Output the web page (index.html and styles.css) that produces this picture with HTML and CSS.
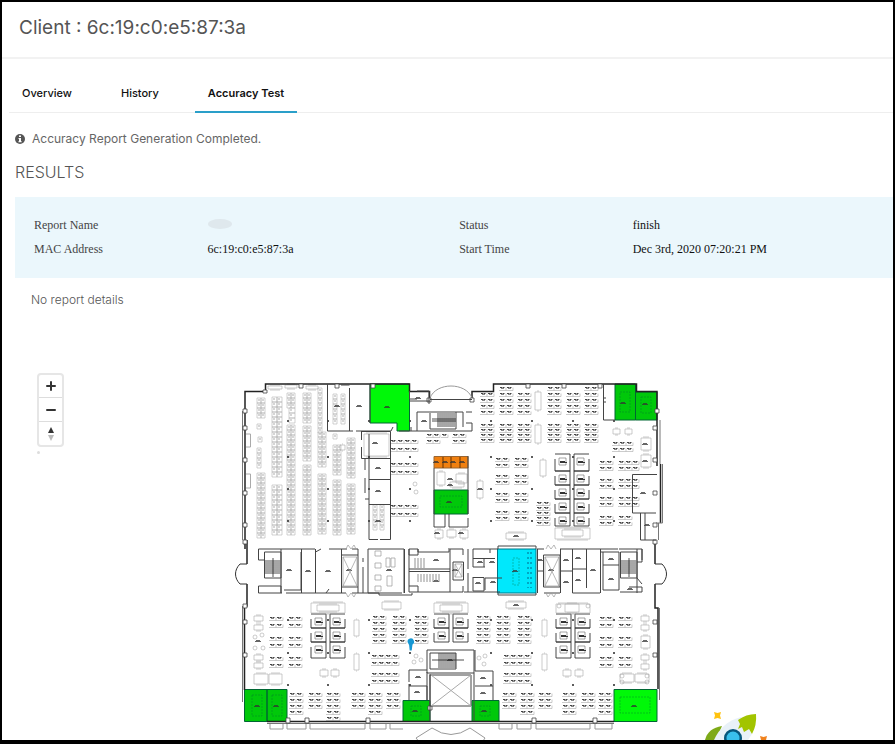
FILE: index.html
```html
<!DOCTYPE html>
<html lang="en">
<head>
  <meta charset="UTF-8" />
  <meta name="viewport" content="width=device-width, initial-scale=1.0"/>
  <title>Client : 6c:19:c0:e5:87:3a</title>
  <link rel="stylesheet" href="styles.css">
</head>
<body>
  <header class="header">
    <h1>Client : 6c:19:c0:e5:87:3a</h1>
  </header>

  <nav class="tabs">
    <a class="tab" href="#overview">Overview</a>
    <a class="tab" href="#history">History</a>
    <a class="tab active" href="#accuracy" aria-current="page">Accuracy Test</a>
  </nav>

  <main class="content">
    <p class="message">
      <svg class="info" viewBox="0 0 10 10" aria-hidden="true">
        <circle cx="5" cy="5" r="5" fill="#555"/>
        <path d="M4 1.5h2v1.5H4zM3.500 4H6v3.300h.7v1H3.400v-1H4V5h-.5z" fill="#fff"/>
      </svg>
      Accuracy Report Generation Completed.
    </p>
    <h2>RESULTS</h2>

    <!-- report summary -->
    <dl class="summary">
      <dt>Report Name</dt>
      <dd><span class="masked"></span></dd>
      <dt>Status</dt>
      <dd>finish</dd>
      <dt>MAC Address</dt>
      <dd>6c:19:c0:e5:87:3a</dd>
      <dt>Start Time</dt>
      <dd>Dec 3rd, 2020 07:20:21 PM</dd>
    </dl>
    <p class="empty">No report details</p>
  </main>

  <!-- floor map -->
  <section class="map">
    <svg class="plan" viewBox="2 320 891 420" role="img" aria-label="Floor plan">
      <!-- coloured rooms -->
      <g stroke="#063" stroke-width="1">
        <path d="M370 384H409.500V431H397V423H370z" fill="#00f808"/>
        <path d="M615 384H635.500V420H615zM635.500 392H657V420H635.500z" fill="#00c80a"/>
        <path d="M434 490H468V514H434z" fill="#00c80a"/>
        <path d="M244.500 689.500H267V721.500H244.500zM267 689.500H287V721.500H267z" fill="#00c80a"/>
        <path d="M403 700.500H430V721.500H403zM472 700.500H499V721.500H472z" fill="#00c80a"/>
        <path d="M614 689.500H657V721.500H614z" fill="#00f808"/>
        <path d="M434 456.500H468V468H434z" fill="#f08010" stroke="#963"/>
        <path d="M497.500 549H536V593H497.500z" fill="#00e8fc" stroke="#078"/>
      </g>

      <!-- stalls, tables and desks -->
      <g id="cells" fill="none" stroke="#b4b4b4" stroke-width=".6"></g>
      <g id="desks"></g>
      <g id="offices" fill="none" stroke="#333" stroke-width=".9"></g>
      <g id="tables" fill="none" stroke="#aaa" stroke-width=".6"></g>
      <g id="labels" fill="#333"></g>

      <!-- outer walls -->
      <g class="wall">
        <path d="M245 549V391.500H265.500V384H409.500V391.500H429.500V399"/>
        <path d="M472 399V391.500H493.500V384H636.500V391.500H657V420"/>
        <path d="M247 540V564M247 584V606H243.500M657 420V466M660.500 464V523M655 540V564M655 584V608H658V689"/>
        <path d="M244.500 606V690M267 721.500H614"/>
      </g>
      <g class="line">
        <path d="M242.500 606V702M242.500 411V540M662.500 464V523H656M660 420V464M658.500 523V540M659.500 608V700M267 723.500H614"/>
        <path d="M247 564H240C234 570 234 578 240 584H247M655 564H662C668 570 668 578 662 584H655" stroke="#333"/>
        <path d="M430 398C436 382 466 382 472 398M270 724V729H283V724M287 724V729H306V724M310 724V729H365V724M370 724V729H386V724M390 724V729H403M499 724V729H512V724M517 724V729H531V724M536 724V729H590V724M595 724V729H612V724" stroke="#999"/>
        <path d="M416 738L432 728Q451 741 470 728L485 738M421 744L416 738M481 744L485 738M428 744Q451 749 474 744" stroke="#999"/>
        <path d="M246 434H250.500V447H246M246 474H250.500V488H246" stroke="#aaa"/>
      </g>
      <g fill="#fff" stroke="#444" stroke-width=".8">
        <path d="M243 409h4v4h-4zM243 426h4v4h-4zM243 458h4v4h-4zM243 491h4v4h-4zM243 523h4v4h-4zM243 540h4v4h-4zM243 604h4v4h-4zM243 620h4v4h-4zM243 653h4v4h-4zM263 390h4v3h-4z"/>
        <path d="M299 384h4v4h-4zM335 384h4v4h-4zM371 384h4v4h-4zM526 384h4v4h-4zM562 384h4v4h-4zM598 384h4v4h-4zM427 398h4v4h-4zM470 398h4v4h-4z"/>
        <path d="M655 409h4v4h-4zM653 426h4v4h-4zM653 458h4v4h-4zM653 491h4v4h-4zM653 523h4v4h-4zM653 540h4v4h-4zM653 620h4v4h-4zM653 653h4v4h-4z"/>
        <path d="M286 718h4v5h-4zM305 718h4v5h-4zM366 718h4v5h-4zM532 718h4v5h-4zM593 718h4v5h-4zM428 706h4v4h-4z"/>
      </g>

      <!-- rooms along the top -->
      <g class="room">
        <path d="M327.500 384V431H353M356 431H370M349.500 388V431M349.500 385H341M370 384V423M370 431H391L393 427M399 431H411V427M417 399H409.500V391M417 391H429V404M409.500 401H430M417 431V412H463V427M430 399.500H472M411 431H472V423H466M430 413V429H456V412M466 412H472"/>
        <path d="M361.500 431.500H390.500V539.500H380M378 539.500H369V434M361.500 431V440M361.500 447V458.500H390M365 459V470M365 478V493M365 499H369M369 479.500H390M369 504.500H390"/>
        <path d="M603.500 384V420H615M603.500 402H606M603.500 398H606"/>
        <path d="M657 474.500H632.500V513H656M640.500 513V540H656M645 513V540"/>
        <path d="M434 468V514M468 456V514"/>
      </g>

      <!-- service core -->
      <g class="room">
        <path d="M258.500 549H315M329 549H347M352 549H358V593M258.500 549V560H264M258.500 593V586H281V593M258.500 593H282M286 593H346M352 593H402M264.500 552H281V578H264.500zM281 549V593M301 552V590H284M301.500 549V593M315.500 549V593M341.500 549V593M341.500 555H358M341.500 587H358M315.500 552L321 549M326 593L329 589"/>
        <path d="M368 549H404V593M368 549V593H379V595H412V593M404.500 549V593M409 549H418V555H409zM418 549V552H449V548M409 569H450M409 571.500H450M409 549V592H450M409 586H418V592M450 549V592M453 562H463.500V580H453zM450 549H463V555M463 586V592H450M363 567V593M363 558V562"/>
        <path d="M473 549H498M473 549V567H485M473 558.500H495M484 558V567M473 577.500H484V591H473V577M485 578H502M490 549V553M485 578V590M468 549V569M468 573V592M464 592H500M498 549V546H536V549M498 593V595H536V593"/>
        <path d="M537.500 549V593M543.500 555V587M537 549H544M537 571H543M543.500 555H560M543.500 587H560V555M544 593H560M560.500 549V593M560 571H572M560 549H586M572.500 549V593H600M586.500 549V588M572 569H586M600.500 549V593M600.500 552H619V590H603V552M603 565H619M620.500 552H637V578H620.500zM586 549H618M619 549H642V562H637M629 587H642V592H620M637 578L642 584M637 549V593M642 549V560"/>
      </g>
      <g fill="none" stroke="#999" stroke-width=".7">
        <path d="M343 557H357V586H343zM343 557L357 586M357 557L343 586M545 557H559V586H545zM545 557L559 586M559 557L545 586M455 564H462V577H455zM455 564L462 577M462 564L455 577"/>
        <path d="M346 549L348 545L351 549L354 545L356 549M346 593L348 597L351 593L354 597L356 593M546 549L548 545L551 549L554 545L556 549M546 593L548 597L551 593L554 597L556 593M386 558h4v9h-4zM391 558h4v9h-4zM387 576h5v10h-5zM375 551h6v5h-6zM375 563h6v5h-6zM375 575h6v5h-6zM375 586h6v5h-6z"/>
      </g>

      <!-- stairs -->
      <g stroke="#222" stroke-width=".8">
        <path d="M265 561H280M265 563H280M265 565H280M265 567H280M265 569H280M265 571H280M265 573H280M273 558V577"/>
        <path d="M621 561H636M621 563H636M621 565H636M621 567H636M621 569H636M621 571H636M621 573H636M629 558V577"/>
        <path d="M438 413V427M440 413V427M442 413V427M444 413V427M446 413V427M448 413V427M450 413V427M452 413V427M454 413V427M432 419H456M432 421H456"/>
        <path d="M439 653V668M441 653V668M443 653V668M445 653V668M447 653V668M449 653V668M451 653V668M453 653V668M455 653V668M432 660H464"/>
        <path d="M415 558V568M418 558V568M421 558V568M424 558V568M427 574V582M430 574V582M433 574V582M436 574V582M439 574V582M418 574V582M421 574V582M424 574V582" stroke="#777"/>
      </g>

      <!-- lobby at the bottom -->
      <g class="room">
        <path d="M427 650H474V671M427 650V673H474M430 653H456V669H430zM474 671V721M430 674V721M409 670H427M409 670V682M409 684V700M409 686H427V700M427 672V700M475 671H493V686M475 686H493V700M475 650V671M430 675H471V706H430z"/>
        <path d="M431 675L471 706M471 675L431 706" stroke="#aaa"/>
      </g>

      <!-- client location -->
      <path d="M407.500 642a3.300 3.300 0 1 1 5 2.500l-.8 6h-2l-.6-5.600z" fill="#1697d3"/>
    </svg>

    <div class="controls">
      <button type="button" aria-label="Zoom in"><svg viewBox="0 0 10 10"><path d="M5 1V9M1 5H9" stroke="#333" stroke-width="2" stroke-linecap="round"/></svg></button>
      <button type="button" aria-label="Zoom out"><svg viewBox="0 0 10 10"><path d="M1 5H9" stroke="#333" stroke-width="2" stroke-linecap="round"/></svg></button>
      <button type="button" aria-label="Reset bearing"><svg class="compass" viewBox="0 0 10 14"><path d="M5 0L8 6H2z" fill="#333"/><path d="M5 14L8 8H2z" fill="#bbb"/></svg></button>
    </div>
    <span class="dot"></span>

    <svg class="rocket" viewBox="700 708 70 32" aria-hidden="true">
      <path d="M705 740Q708 728 722 726L716 740z" fill="#7eaa18"/>
      <path d="M714 740Q722 722 741 717L752 734L748 740z" fill="#e8f1f8"/>
      <path d="M738 720Q746 714 756 714Q757 725 752 734L749 729L744 732L742 727L738 729L740 724z" fill="#a2c400"/>
      <circle cx="733" cy="738" r="9" fill="#07577c"/>
      <circle cx="733" cy="738" r="6.500" fill="#39c0ec"/>
      <path d="M714 712l3.500 1 3.500-1-1 3.500 1 3.500-3.500-1-3.500 1 1-3.500z" fill="#ffc20e"/>
      <path d="M760 736l3.500 1 3.500-1-1 4h-5z" fill="#f0821e"/>
    </svg>
  </section>

  <script src="plan.js"></script>
</body>
</html>
```

FILE: styles.css
```css
/* page */
* {
  box-sizing: border-box;
}
body {
  margin: 0;
  min-height: 100vh;
  display: flex;
  flex-direction: column;
  border: 2px solid #000;
  border-bottom-width: 4px;
  background: #fff;
  font-family: Inter, "Liberation Sans", sans-serif;
  color: #555;
}
h1, h2, p, dl, dd {
  margin: 0;
}

/* title bar */
.header {
  padding: 13px 17px 16px;
  border-bottom: 2px solid #f2f2f2;
}
.header h1 {
  font-size: 19px;
  line-height: 26px;
  font-weight: 400;
}

/* tabs */
.tabs {
  display: flex;
  gap: 23px;
  margin: 16px 0 0 7px;
  border-bottom: 1px solid #eee;
}
.tab {
  padding: 8px 13px;
  margin-bottom: -1px;
  border-bottom: 2px solid transparent;
  font-size: 11px;
  line-height: 20px;
  font-weight: 500;
  color: #111;
  text-decoration: none;
}
.tab.active {
  border-color: #2a9fc9;
  font-weight: 600;
}

/* results */
.content {
  padding-left: 13px;
}
.message {
  display: flex;
  align-items: center;
  gap: 7px;
  margin-top: 16px;
  font-size: 12px;
  line-height: 20px;
  color: #666;
}
.info {
  width: 10px;
  height: 10px;
}
.content h2 {
  margin-top: 11px;
  font-size: 16px;
  line-height: 24px;
  font-weight: 300;
}
.summary {
  display: grid;
  grid-template-columns: 20fr 29fr 20fr 30fr;
  row-gap: 4px;
  margin-top: 13px;
  padding: 18px 0 19px 19px;
  background: #ebf7fc;
  font-family: "Liberation Serif", serif;
  font-size: 12px;
  line-height: 20px;
}
.summary dt {
  color: #444;
}
.summary dd {
  color: #111;
}
.masked {
  display: block;
  width: 24px;
  height: 10px;
  margin-top: 4px;
  border-radius: 50%;
  background: #dfe8ed;
}
.empty {
  padding: 12px 16px 10px;
  font-size: 12px;
  line-height: 20px;
  font-weight: 300;
}

/* floor map */
.map {
  position: relative;
  flex: 1;
  overflow: hidden;
}
.plan {
  display: block;
  width: 100%;
}
.wall {
  fill: none;
  stroke: #222;
  stroke-width: 1.5px;
}
.room {
  fill: none;
  stroke: #444;
  stroke-width: 1px;
}
.line {
  fill: none;
  stroke: #777;
  stroke-width: 1px;
}
.controls {
  position: absolute;
  top: 53px;
  left: 35px;
  display: flex;
  flex-direction: column;
  border: 2px solid #e6e6e6;
  border-radius: 4px;
  background: #fff;
}
.controls button {
  display: flex;
  align-items: center;
  justify-content: center;
  width: 23px;
  height: 22px;
  padding: 0;
  border: none;
  background: none;
  cursor: pointer;
}
.controls button + button {
  height: 24px;
  border-top: 1px solid #ddd;
}
.controls svg {
  width: 10px;
  height: 10px;
}
.controls .compass {
  height: 14px;
}
.dot {
  position: absolute;
  top: 131px;
  left: 35px;
  width: 3px;
  height: 3px;
  border-radius: 50%;
  background: #ddd;
}
.rocket {
  position: absolute;
  right: 123px;
  bottom: 0;
  width: 70px;
  height: 32px;
}
```

FILE: plan.js
```js
// fills the floor plan with its repeated furniture
const layer = id => document.getElementById(id);

function addPath(id, d, attrs) {
  const path = document.createElementNS('http://www.w3.org/2000/svg', 'path');
  path.setAttribute('d', d);
  for (const name in attrs || {}) path.setAttribute(name, attrs[name]);
  layer(id).appendChild(path);
}

// parking style stalls: x, top, bottom, columns, cell width
const stalls = [
  [257, 398, 419, 2, 4], [257, 424, 431, 1, 4], [258, 437, 444, 1, 4], [257, 448, 467, 1, 4], [257, 473, 537, 2, 4],
  [272, 397, 478, 2, 5], [272, 485, 537, 2, 5],
  [287, 393, 408, 2, 4], [289, 408, 425, 1, 6], [287, 425, 537, 2, 4],
  [303, 393, 422, 2, 4], [303, 426, 460, 2, 4], [303, 465, 537, 2, 4],
  [318, 388, 432, 1, 4], [318, 432, 470, 2, 4], [318, 474, 537, 2, 4],
  [333, 434, 440, 1, 4], [333, 445, 475, 2, 4], [333, 480, 537, 2, 4],
  [347, 438, 480, 2, 4], [347, 484, 537, 2, 4],
  [333, 394, 425, 1, 4], [341, 394, 425, 1, 4],
  [373, 505, 533, 1, 4], [380, 505, 533, 1, 4]
];
for (const [x, top, bottom, cols, w] of stalls) {
  let d = '', marks = '';
  for (let y = top; y + 4 <= bottom; y += 5) {
    for (let c = 0; c < cols; c++) {
      d += `M${x + c * w} ${y}h${w}v5h${-w}z`;
      marks += `M${x + c * w + 1} ${y + 2}h2`;
    }
  }
  addPath('cells', d);
  addPath('cells', marks, { stroke: '#777' });
}

// desk groups: x, y, columns, rows, row pitch
const desks = [];
for (const [x, top] of [[481, 393], [500, 387], [518, 393], [548, 387], [567, 393], [585, 387]]) {
  desks.push([x, top, 2, top === 387 ? 5 : 4, 6], [x, 424, 2, 4, 5]);
}
for (const y of [458, 475, 493, 511]) desks.push([496, y, 2, 2, 6], [515, y, 2, 2, 6]);
desks.push([537, 502, 2, 5, 5], [613, 442, 3, 2, 6]);
for (const y of [461, 479, 497, 516]) desks.push([600, y, 2, 2, 6], [619, y, y < 500 ? 3 : 2, 2, 6]);
for (const y of [440, 463, 505]) desks.push([391, y, 4, 2, 8]);
desks.push([427, 434, 2, 2, 6], [442, 434, 1, 1, 6], [453, 434, 2, 2, 6]);
for (const y of [617, 637, 657]) {
  desks.push([270, y, 2, 2, 7], [289, y, 2, 2, 7], [600, y, 2, 2, 7], [619, y, 2, 2, 7]);
}
for (const x of [373, 393, 415, 477, 497, 518]) desks.push([x, 616, 2, 5, 6]);
for (const y of [655, 673]) desks.push([372, y, 4, 2, 7], [504, y, 4, 2, 7]);
for (const [x, rows] of [[290, 4], [309, 3], [327, 5], [352, 3], [369, 4], [387, 3], [503, 3], [521, 4], [539, 3], [563, 4], [582, 3], [599, 4]]) {
  desks.push([x, 693, 2, rows, 6]);
}
for (const [x, y, cols, rows, pitch] of desks) {
  let marks = '', chairs = '', edges = '';
  for (let r = 0; r < rows; r++) {
    for (let c = 0; c < cols; c++) {
      const dx = x + c * 7, dy = y + r * pitch;
      marks += `M${dx} ${dy + .5}h5`;
      chairs += `M${dx + 1} ${dy + 1.5}h3`;
      edges += `M${dx - 1} ${dy + 3.5}h7v-3`;
    }
  }
  addPath('desks', edges, { fill: 'none', stroke: '#aaa', 'stroke-width': .6 });
  addPath('desks', chairs, { stroke: '#888', 'stroke-width': 1 });
  addPath('desks', marks, { stroke: '#444', 'stroke-width': 1, 'stroke-dasharray': '2 .5' });
}

// office blocks: x, y, row heights; each block is two rooms wide
const blocks = [
  [555, 454, [17, 14, 14, 14, 13]], [311, 614, [14, 14, 16]],
  [434, 614, [14, 14]], [556, 614, [14, 14, 16]]
];
for (const [x, y, rows] of blocks) {
  let top = y;
  for (const h of rows) {
    addPath('offices', `M${x} ${top}h15v${h}h-15M${x} ${top + 5}v${h - 5}M${x + 34} ${top}h-15v${h}h15M${x + 34} ${top + 5}v${h - 5}`);
    addPath('labels', `M${x + 5} ${top + 7}h5v1h2v1h-7zM${x + 23} ${top + 7}h5v1h2v1h-7z`);
    addPath('tables', `M${x + 4} ${top + 4}h7v7h-7zM${x + 22} ${top + 4}h7v7h-7z`, { stroke: '#666' });
    top += h;
  }
}
addPath('offices', 'M434 514V527M445 514V527H434M449 514V527H468M468 518V527');

// loose tables and lounge furniture: x, y, w, h
const tables = [
  [535, 392, 6, 18], [535, 425, 6, 18], [477, 481, 6, 17], [540, 460, 6, 16], [506, 533, 20, 6], [506, 602, 20, 6],
  [555, 528, 35, 11], [562, 530, 21, 6], [613, 429, 7, 5], [625, 429, 7, 5], [641, 438, 10, 12], [641, 455, 10, 12],
  [311, 603, 34, 10], [317, 605, 22, 6], [434, 603, 34, 10], [440, 605, 22, 6], [556, 604, 34, 9], [565, 604, 14, 8],
  [354, 620, 5, 16], [354, 654, 5, 16], [542, 620, 5, 16], [542, 654, 5, 16], [382, 602, 19, 7],
  [320, 670, 8, 6], [331, 670, 8, 6], [563, 670, 8, 6], [575, 670, 8, 6], [254, 674, 14, 10], [269, 674, 13, 10],
  [254, 616, 9, 5], [254, 625, 9, 5], [254, 655, 9, 5], [254, 663, 9, 5], [641, 616, 8, 5], [641, 625, 8, 5],
  [641, 636, 9, 12], [641, 655, 8, 5], [641, 664, 8, 5], [620, 674, 14, 8], [635, 674, 14, 8],
  [437, 472, 8, 13], [450, 482, 14, 5], [456, 474, 11, 9], [435, 530, 8, 8], [447, 530, 9, 7], [460, 530, 8, 8],
  [268, 386, 14, 3], [285, 385, 12, 3], [306, 386, 12, 3], [340, 445, 5, 5], [364, 434, 25, 22]
];
let tops = '';
for (const [x, y, w, h] of tables) {
  tops += `M${x} ${y}h${w}v${h}h${-w}zM${x + 2} ${y - 1}h${w - 4}M${x + 2} ${y + h + 1}h${w - 4}`;
}
addPath('tables', tops);

// round seats
let seats = '';
for (const [x, y] of [[255, 637], [262, 635], [255, 648], [263, 648], [416, 656], [421, 660], [414, 662], [479, 658], [485, 656], [484, 664], [415, 484], [416, 492], [622, 676], [622, 682], [647, 676], [647, 682], [588, 606], [559, 606]]) {
  seats += `M${x - 2} ${y}a2 2 0 1 0 4 0a2 2 0 1 0 -4 0`;
}
addPath('tables', seats);

// conference tables in the coloured rooms
for (const [x, y, w, h] of [[620, 392, 10, 20], [641, 397, 10, 16], [440, 496, 22, 11], [252, 695, 10, 21], [272, 695, 10, 21], [411, 706, 10, 10], [480, 706, 10, 10], [620, 697, 30, 16], [513, 558, 6, 27]]) {
  addPath('tables', `M${x} ${y}h${w}v${h}h${-w}z`, { stroke: '#063', 'stroke-dasharray': '2 1', opacity: .6 });
}
addPath('tables', 'M528 552V588M531 552V588', { stroke: '#068', 'stroke-dasharray': '2 3', 'stroke-width': 1 });
addPath('tables', 'M443 457V468M451 457V468M460 457V468', { stroke: '#630', 'stroke-width': 1 });

// room labels and column marks
const labels = [
  [337, 406], [359, 406], [387, 407], [375, 443], [378, 468], [378, 491], [378, 521], [436, 462], [445, 462], [453, 462], [462, 462],
  [449, 502], [450, 479], [623, 403], [645, 404], [643, 493], [647, 525], [257, 706], [276, 706], [415, 711], [484, 711], [634, 706],
  [515, 571], [289, 570], [308, 571], [328, 571], [349, 570], [389, 570], [436, 560], [436, 581], [455, 570], [480, 562], [478, 583],
  [492, 562], [493, 582], [540, 560], [551, 570], [566, 560], [566, 582], [578, 558], [578, 580], [593, 570], [611, 559], [611, 579],
  [418, 398], [424, 421], [450, 485], [480, 489], [450, 660], [418, 677], [417, 692], [483, 678], [483, 693], [630, 589],
  [258, 641], [645, 444], [645, 461], [645, 641], [516, 536], [516, 605], [437, 533], [461, 533]
];
addPath('labels', labels.map(([x, y]) => `M${x - 2} ${y - 1}h4v1h1v1h-6v-1h1z`).join(''), { opacity: .75 });
let posts = '';
for (const x of [288, 328, 369, 410, 491, 532, 573, 614]) {
  for (const y of [421, 457, 489, 521, 620, 653, 685]) posts += `M${x - 1} ${y - 1}h2v2h-2z`;
}
addPath('labels', posts, { opacity: .8 });
```
